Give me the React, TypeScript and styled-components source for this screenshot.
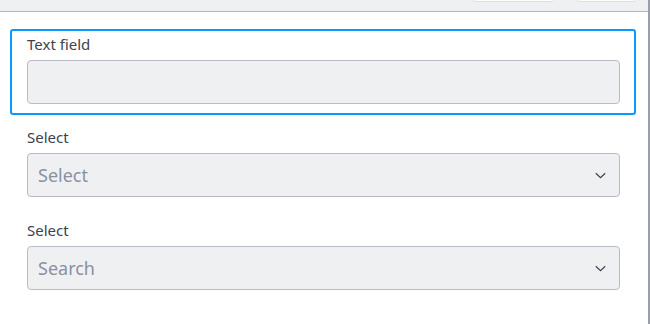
import styled, { createGlobalStyle } from "styled-components"

const GlobalStyle = createGlobalStyle`
    html, body {
        margin: 0;
        padding: 0;
        background: #ffffff;
    }
    body {
        font-family: "Noto Sans", "Liberation Sans", sans-serif;
    }
`

const Panel = styled.div`
    width: 648px;
    height: 324px;
    border-right: 2px solid #9a9eab;
    background: #ffffff;
    overflow: hidden;
`

const Toolbar = styled.div`
    height: 11px;
    display: flex;
    align-items: flex-end;
    justify-content: flex-end;
    gap: 19px;
    padding: 0 11px 9px 0;
    box-sizing: content-box;
    margin-top: -9px;
    background: #eff0f2;
    border-bottom: 1px solid #b3b6c0;
    overflow: hidden;
`

const ToolButton = styled.div<{ $width: number }>`
    width: ${(p) => p.$width}px;
    height: 20px;
    background: #ffffff;
    border: 1px solid #dcdee3;
    border-radius: 5px;
    box-sizing: border-box;
`

const Form = styled.div`
    display: flex;
    flex-direction: column;
    gap: 7px;
    padding: 17px 12px 0 10px;
`

const Field = styled.div<{ $focused?: boolean }>`
    display: flex;
    flex-direction: column;
    gap: 6px;
    padding: 3px 14px 9px 15px;
    border: 2px solid ${(p) => (p.$focused ? "#0a99ff" : "transparent")};
    border-radius: 3px;
`

const Label = styled.label`
    font-size: 15px;
    line-height: 20px;
    color: #3d4250;
`

const InputBox = styled.div`
    height: 44px;
    display: flex;
    align-items: center;
    padding: 0 13px 0 10px;
    background: #eff0f2;
    border: 1px solid #b9bcc5;
    border-radius: 4px;
    box-sizing: border-box;
`

const Placeholder = styled.span`
    flex: 1;
    font-size: 18px;
    color: #8a90a0;
`

const Chevron = () => (
    <svg width="11" height="7" viewBox="0 0 11 7" fill="none">
        <path d="M0.8 1.2 L5.5 5.6 L10.2 1.2" stroke="#3d4250" strokeWidth="1.2" />
    </svg>
)

export default function App() {
    return (
        <>
            <GlobalStyle />
            <Panel>
                <Toolbar>
                    <ToolButton $width={85} />
                    <ToolButton $width={62} />
                </Toolbar>
                <Form>
                    <Field $focused>
                        <Label>Text field</Label>
                        <InputBox />
                    </Field>
                    <Field>
                        <Label>Select</Label>
                        <InputBox>
                            <Placeholder>Select</Placeholder>
                            <Chevron />
                        </InputBox>
                    </Field>
                    <Field>
                        <Label>Select</Label>
                        <InputBox>
                            <Placeholder>Search</Placeholder>
                            <Chevron />
                        </InputBox>
                    </Field>
                </Form>
            </Panel>
        </>
    )
}
